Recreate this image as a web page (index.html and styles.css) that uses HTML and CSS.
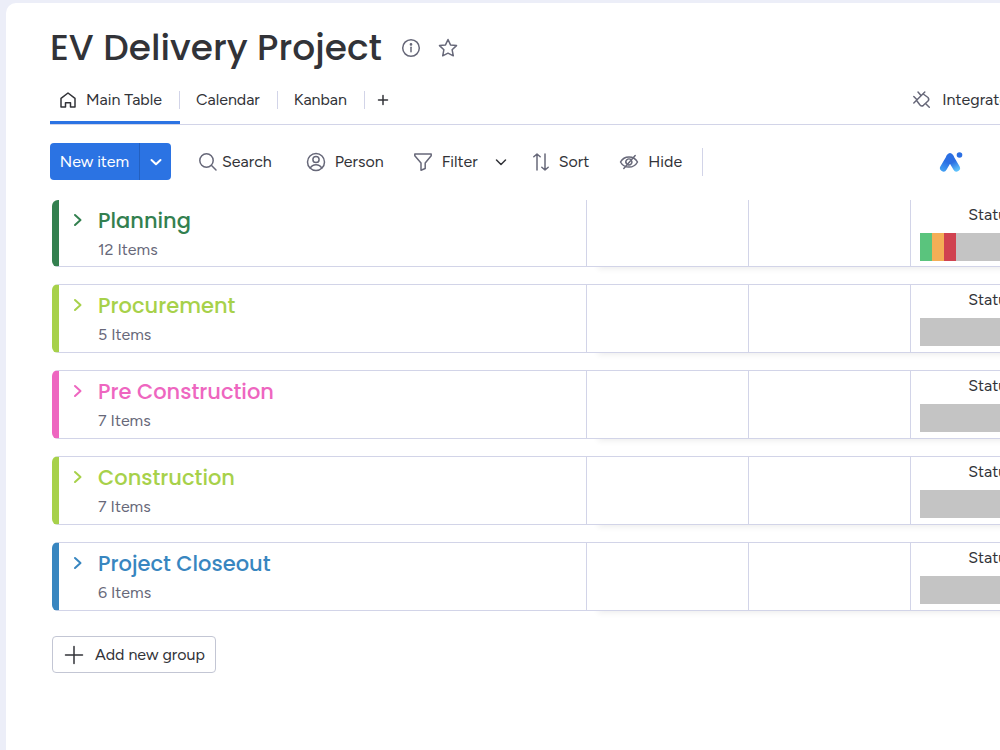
FILE: index.html
```html
<!DOCTYPE html>
<html lang="en">
<head>
<meta charset="utf-8">
<meta name="viewport" content="width=device-width, initial-scale=1">
<title>EV Delivery Project</title>
<link rel="stylesheet" href="styles.css">
</head>
<body>
<main class="panel">
  <div class="board">
    <header class="title-row">
      <h1 class="title">EV Delivery Project</h1>
      <button class="icon-button" aria-label="Board info"><svg class="icon" width="20" height="20" viewBox="0 0 20 20"><circle cx="10" cy="10" r="8.3"/><path d="M10 9.2v4.6"/><circle cx="10" cy="6.4" r=".6" class="solid"/></svg></button>
      <button class="icon-button" aria-label="Add to favorites"><svg class="icon" width="20" height="20" viewBox="0 0 20 20"><path d="M10 1.5l2.500 5.400 6 .7-4.400 4.100 1.200 6.100L10 15.200l-5.300 2.600 1.200-6.100L1.500 7.600l6-.7z"/></svg></button>
    </header>

    <nav class="tabs" aria-label="Board views">
      <a class="tab tab-active" href="#main"><svg class="icon dark" width="18" height="18" viewBox="0 0 18 18"><path d="M2 16V7.400L9 2l7 5.400V16h-4.500v-4.300h-5V16z"/></svg>Main Table</a>
      <a class="tab" href="#calendar">Calendar</a>
      <a class="tab" href="#kanban">Kanban</a>
      <button class="tab-add" aria-label="Add view"><svg class="icon dark" width="12" height="12" viewBox="0 0 12 12"><path d="M6 1.500v9M1.500 6h9"/></svg></button>
      <button class="integrate"><svg class="icon" width="20" height="20" viewBox="0 0 20 20"><path d="M1.800 13L12.800 2M6 2l3 3.500M1.800 6.500L5 9.700M4.600 10.500L8 15q1.600 1.800 3.400.3L16 11q1.500-1.700 0-3.500L11.200 4M14 14l3.300 3.300"/></svg>Integrate</button>
    </nav>

    <div class="toolbar">
      <div class="new-item">
        <button class="new-main">New item</button>
        <button class="new-more" aria-label="More item options"><svg class="icon light" width="14" height="14" viewBox="0 0 14 14"><path d="M2.500 5L7 9.300 11.500 5"/></svg></button>
      </div>
      <button class="tool search"><svg class="icon" width="20" height="20" viewBox="0 0 20 20"><circle cx="8.500" cy="8.500" r="6.700"/><path d="M13.300 13.300L18 18"/></svg>Search</button>
      <button class="tool person"><svg class="icon" width="20" height="20" viewBox="0 0 20 20"><circle cx="10" cy="10" r="8.500"/><circle cx="10" cy="7.500" r="3.100"/><path d="M4.300 16c1.200-2.300 3.200-3.300 5.700-3.300s4.500 1 5.700 3.300"/></svg>Person</button>
      <button class="tool filter"><svg class="icon" width="20" height="20" viewBox="0 0 20 20"><path d="M1.800 2h16.400v1.800L12.200 11v5.500L8 18.300V11L1.800 3.800z"/></svg>Filter</button>
      <button class="tool filter-more" aria-label="Filter options"><svg class="icon dark" width="14" height="14" viewBox="0 0 14 14"><path d="M2.500 5L7 9.500 11.500 5"/></svg></button>
      <button class="tool sort"><svg class="icon" width="18" height="20" viewBox="0 0 18 20"><path d="M5 18V2M1.800 4.800L5 2l3.200 2.800M13 2v16M9.800 15.200L13 18l3.200-2.800"/></svg>Sort</button>
      <button class="tool hide"><svg class="icon" width="20" height="20" viewBox="0 0 20 20"><path d="M1.500 10C3.500 6.300 6.500 4.900 10 4.900s6.500 1.400 8.500 5.100c-2 3.700-5 5.100-8.500 5.100S3.500 13.700 1.500 10z"/><path d="M7.800 12a3 3 0 0 1 4.300-4.200M12.800 9.200A3 3 0 0 1 9.300 13M4.800 16.500L16.200 3.500"/></svg>Hide</button>
      <span class="divider"></span>
      <button class="assistant" aria-label="Assistant">
        <svg width="24" height="22" viewBox="0 0 24 22" fill="none" stroke-width="7" stroke-linecap="round">
          <defs>
            <linearGradient id="leg-left" gradientUnits="userSpaceOnUse" x1="11" y1="6" x2="4" y2="19"><stop offset=".4" stop-color="#2b6fe3"/><stop offset="1" stop-color="#3f9bf2"/></linearGradient>
            <linearGradient id="leg-right" gradientUnits="userSpaceOnUse" x1="11" y1="6" x2="18" y2="19"><stop offset=".4" stop-color="#2b6fe3"/><stop offset="1" stop-color="#5cc0fb"/></linearGradient>
          </defs>
          <path d="M11 6l6.500 11" stroke="url(#leg-right)"/>
          <path d="M11 6L4.500 17" stroke="url(#leg-left)"/>
          <circle cx="20.500" cy="4" r="2.800" fill="#2b6fe3"/>
        </svg>
      </button>
    </div>

    <div class="groups">
      <section class="group planning">
        <div class="group-head"><button class="toggle" aria-label="Expand Planning"><svg class="icon" width="12" height="16" viewBox="0 0 12 16"><path d="M3 3l5.500 5L3 13"/></svg></button><div><h2 class="name">Planning</h2><p class="count">12 Items</p></div></div>
        <div class="cell"></div><div class="cell"></div>
        <div class="cell status"><span>Status</span><div class="battery"><i class="done"></i><i class="working"></i><i class="stuck"></i></div></div>
      </section>
      <section class="group lime">
        <div class="group-head"><button class="toggle" aria-label="Expand Procurement"><svg class="icon" width="12" height="16" viewBox="0 0 12 16"><path d="M3 3l5.500 5L3 13"/></svg></button><div><h2 class="name">Procurement</h2><p class="count">5 Items</p></div></div>
        <div class="cell"></div><div class="cell"></div>
        <div class="cell status"><span>Status</span><div class="battery"></div></div>
      </section>
      <section class="group pink">
        <div class="group-head"><button class="toggle" aria-label="Expand Pre Construction"><svg class="icon" width="12" height="16" viewBox="0 0 12 16"><path d="M3 3l5.500 5L3 13"/></svg></button><div><h2 class="name">Pre Construction</h2><p class="count">7 Items</p></div></div>
        <div class="cell"></div><div class="cell"></div>
        <div class="cell status"><span>Status</span><div class="battery"></div></div>
      </section>
      <section class="group lime">
        <div class="group-head"><button class="toggle" aria-label="Expand Construction"><svg class="icon" width="12" height="16" viewBox="0 0 12 16"><path d="M3 3l5.500 5L3 13"/></svg></button><div><h2 class="name">Construction</h2><p class="count">7 Items</p></div></div>
        <div class="cell"></div><div class="cell"></div>
        <div class="cell status"><span>Status</span><div class="battery"></div></div>
      </section>
      <section class="group blue">
        <div class="group-head"><button class="toggle" aria-label="Expand Project Closeout"><svg class="icon" width="12" height="16" viewBox="0 0 12 16"><path d="M3 3l5.500 5L3 13"/></svg></button><div><h2 class="name">Project Closeout</h2><p class="count">6 Items</p></div></div>
        <div class="cell"></div><div class="cell"></div>
        <div class="cell status"><span>Status</span><div class="battery"></div></div>
      </section>
    </div>

    <button class="add-group"><svg class="icon dark" width="20" height="20" viewBox="0 0 20 20"><path d="M10 1.500v17M1.500 10h17"/></svg>Add new group</button>
  </div>
</main>
</body>
</html>
```
FILE: styles.css
```css
* { box-sizing: border-box; }

body {
  margin: 0;
  min-height: 100vh;
  padding: 3px 0 0 6px;
  display: flex;
  background: #eceef8;
  color: #323338;
  font: 16px/24px Figtree, Inter, sans-serif;
  overflow-x: hidden;
}

button {
  margin: 0;
  padding: 0;
  border: 0;
  background: none;
  color: inherit;
  font: inherit;
  cursor: pointer;
}

.panel {
  flex: 1;
  min-width: 0;
  padding: 20px 0 40px 44px;
  background: #fff;
  border-top-left-radius: 10px;
  overflow: hidden;
}

/* The board runs past the right edge of the window. */
.board { width: calc(100% + 73px); }

.icon {
  display: block;
  flex: none;
  fill: none;
  stroke: #676879;
  stroke-width: 1.5;
  stroke-linejoin: round;
  stroke-linecap: round;
}
.icon.dark { stroke: #323338; }
.icon.light { stroke: #fff; stroke-width: 2; }
.icon .solid { fill: #676879; }

.title-row {
  display: flex;
  align-items: center;
  height: 50px;
}
.title {
  margin: 0 9px 0 0;
  font: 500 36px/50px Poppins, Inter, sans-serif;
  white-space: nowrap;
}
.icon-button { margin-left: 10px; }
.icon-button + .icon-button { margin-left: 17px; }

.tabs {
  display: flex;
  align-items: stretch;
  height: 52px;
  border-bottom: 1px solid #d2d4e8;
}
.tab {
  position: relative;
  display: flex;
  align-items: center;
  padding: 2px 18px 0 16px;
  color: inherit;
  text-decoration: none;
}
.tab::after {
  content: "";
  position: absolute;
  right: 0;
  top: 18px;
  height: 18px;
  border-right: 1px solid #d2d4e8;
}
.tab-active {
  gap: 9px;
  padding: 5px 18px 0 9px;
  border-bottom: 3px solid #2b73e3;
}
.tab-add { padding: 2px 12px 0; }
.integrate {
  display: flex;
  align-items: center;
  gap: 10px;
  margin-left: auto;
  margin-right: 65px;
  padding-top: 2px;
}

.toolbar {
  display: flex;
  align-items: center;
  padding: 18px 0 20px;
}
.new-item {
  display: flex;
  height: 37px;
  border-radius: 4px;
  background: #2b73e3;
  color: #fff;
}
.new-main { width: 89px; }
.new-more {
  display: grid;
  place-items: center;
  width: 32px;
  border-left: 1px solid #2360c0;
}
.tool {
  display: flex;
  align-items: center;
}
.search { margin-left: 27px; gap: 4px; }
.person { margin-left: 34px; gap: 9px; }
.filter { margin-left: 29px; gap: 9px; }
.filter-more { margin-left: 16px; }
.sort { margin-left: 24px; gap: 9px; }
.hide { margin-left: 30px; gap: 9px; }
.divider {
  height: 28px;
  margin-left: 20px;
  border-left: 1px solid #d2d4e8;
}
.assistant {
  display: flex;
  margin-left: auto;
  margin-right: 110px;
}

.groups {
  display: grid;
  gap: 17px;
  margin-left: 2px;
}
.group {
  --color: #33804f;
  display: grid;
  grid-template-columns: 1fr 162px 162px 162px;
  height: 69px;
  border: 1px solid #d2d4e8;
  border-left: 7px solid var(--color);
  border-radius: 6px;
  box-shadow: 540px 8px 6px -6px rgba(0, 0, 0, .07);
}
.planning { height: 67px; border-top: 0; }
.lime { --color: #a7d14a; }
.pink { --color: #ee66c0; }
.blue { --color: #3886c0; }

.group-head {
  display: flex;
  align-items: flex-start;
  padding: 6px 0 0 13px;
}
.toggle { padding: 6px 14px 6px 0; }
.toggle .icon { stroke: var(--color); stroke-width: 2; }
.name {
  margin: 0;
  color: var(--color);
  font: 500 21px/30px Poppins, Inter, sans-serif;
}
.count {
  margin: 2px 0 0;
  color: #676879;
}
.cell { border-left: 1px solid #d2d4e8; }
.status {
  padding: 3px 9px 0;
  text-align: center;
}
.battery {
  display: flex;
  height: 28px;
  margin-top: 6px;
  background: #c4c4c4;
}
.battery i { width: 12px; }
.done { background: #5ac47d; }
.working { background: #f4ae56; }
.stuck { background: #d04250; }

.add-group {
  display: flex;
  align-items: center;
  gap: 11px;
  height: 37px;
  margin: 25px 0 0 2px;
  padding: 0 10px 0 11px;
  border: 1px solid #c3c6d4;
  border-radius: 4px;
}
```
